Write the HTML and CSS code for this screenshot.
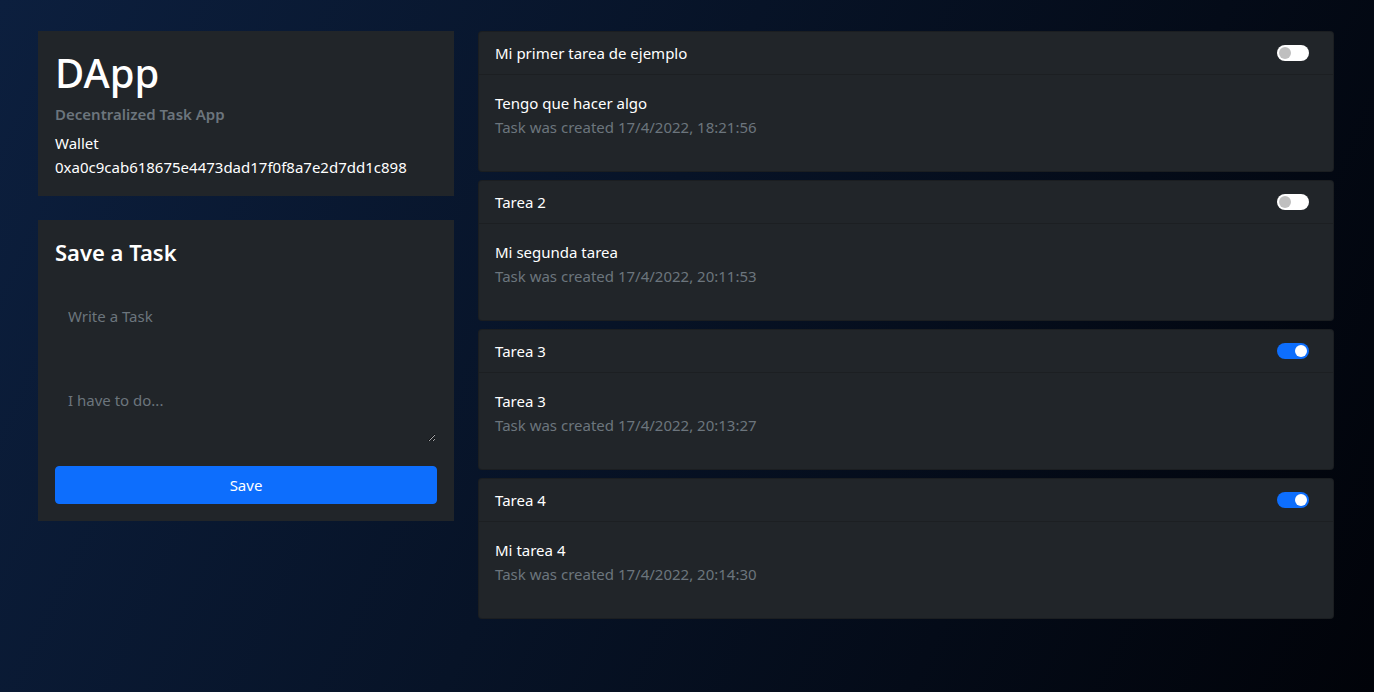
FILE: index.html
```html
<!DOCTYPE html>
<html lang="es">
<head>
<meta charset="utf-8">
<title>DApp</title>
<link rel="stylesheet" href="styles.css">
</head>
<body>
<main class="page">
  <aside class="side">
    <section class="panel info">
      <h1 class="brand">DApp</h1>
      <p class="tagline">Decentralized Task App</p>
      <p class="line">Wallet</p>
      <p class="line">0xa0c9cab618675e4473dad17f0f8a7e2d7dd1c898</p>
    </section>
    <section class="panel form">
      <h2 class="form-title">Save a Task</h2>
      <input class="field" type="text" placeholder="Write a Task">
      <textarea class="field area" rows="2" placeholder="I have to do..."></textarea>
      <button class="btn" type="button">Save</button>
    </section>
  </aside>
  <section class="tasks">
    <article class="task">
      <header class="task-head"><span>Mi primer tarea de ejemplo</span><span class="switch"></span></header>
      <div class="task-body"><p class="desc">Tengo que hacer algo</p><p class="meta">Task was created 17/4/2022, 18:21:56</p></div>
    </article>
    <article class="task">
      <header class="task-head"><span>Tarea 2</span><span class="switch"></span></header>
      <div class="task-body"><p class="desc">Mi segunda tarea</p><p class="meta">Task was created 17/4/2022, 20:11:53</p></div>
    </article>
    <article class="task">
      <header class="task-head"><span>Tarea 3</span><span class="switch on"></span></header>
      <div class="task-body"><p class="desc">Tarea 3</p><p class="meta">Task was created 17/4/2022, 20:13:27</p></div>
    </article>
    <article class="task">
      <header class="task-head"><span>Tarea 4</span><span class="switch on"></span></header>
      <div class="task-body"><p class="desc">Mi tarea 4</p><p class="meta">Task was created 17/4/2022, 20:14:30</p></div>
    </article>
  </section>
</main>
</body>
</html>
```
FILE: styles.css
```css
* { box-sizing: border-box; }
html, body { height: 100%; }
body {
  margin: 0;
  font-family: "Noto Sans", "Open Sans", sans-serif;
  font-size: 15px;
  line-height: 24px;
  color: #fff;
  background: linear-gradient(115deg, #0c1f3e 0%, #071327 45%, #010309 100%);
  min-height: 692px;
}
.page {
  display: flex;
  gap: 24px;
  padding: 31px 40px 0 38px;
  align-items: flex-start;
}
.side {
  width: 416px;
  flex: none;
  display: flex;
  flex-direction: column;
  gap: 24px;
}
.panel {
  background: #212529;
  padding: 18px 17px 17px;
}
.brand {
  margin: 0 0 5px;
  font-size: 40px;
  line-height: 48px;
  font-weight: 500;
}
.tagline {
  margin: 0 0 5px;
  color: #6c757d;
  font-weight: 600;
}
.line { margin: 0; }
.form { padding: 18px 17px 17px; }
.form-title {
  margin: 0 0 31px;
  font-size: 22px;
  line-height: 28px;
  font-weight: 600;
}
.field {
  display: block;
  width: 100%;
  background: #212529;
  border: 1px solid #212529;
  color: #fff;
  font: inherit;
  padding: 6px 12px;
  line-height: 24px;
  outline: none;
  border-radius: 0;
}
.field::placeholder { color: #6c757d; }
.area {
  margin-top: 46px;
  height: 62px;
  resize: vertical;
}
.btn {
  display: block;
  width: 100%;
  margin-top: 23px;
  height: 38px;
  background: #0d6efd;
  border: 1px solid #0d6efd;
  border-radius: 4px;
  color: #fff;
  font: inherit;
  cursor: pointer;
}
.tasks {
  flex: 1;
  display: flex;
  flex-direction: column;
  gap: 8px;
}
.task {
  background: #212529;
  border: 1px solid rgba(0,0,0,.175);
  border-radius: 4px;
  height: 141px;
}
.task-head {
  display: flex;
  justify-content: space-between;
  align-items: center;
  padding: 9px 24px 9px 16px;
  border-bottom: 1px solid rgba(0,0,0,.15);
}
.task-body { padding: 16px; }
.desc, .meta { margin: 0; }
.meta { color: #6c757d; }
.switch {
  width: 32px;
  height: 16px;
  border-radius: 8px;
  background: #fff;
  position: relative;
}
.switch::after {
  content: "";
  position: absolute;
  left: 2px;
  top: 2px;
  width: 12px;
  height: 12px;
  border-radius: 50%;
  background: #bfbfbf;
}
.switch.on { background: #0d6efd; }
.switch.on::after { left: 18px; background: #fff; }
```
